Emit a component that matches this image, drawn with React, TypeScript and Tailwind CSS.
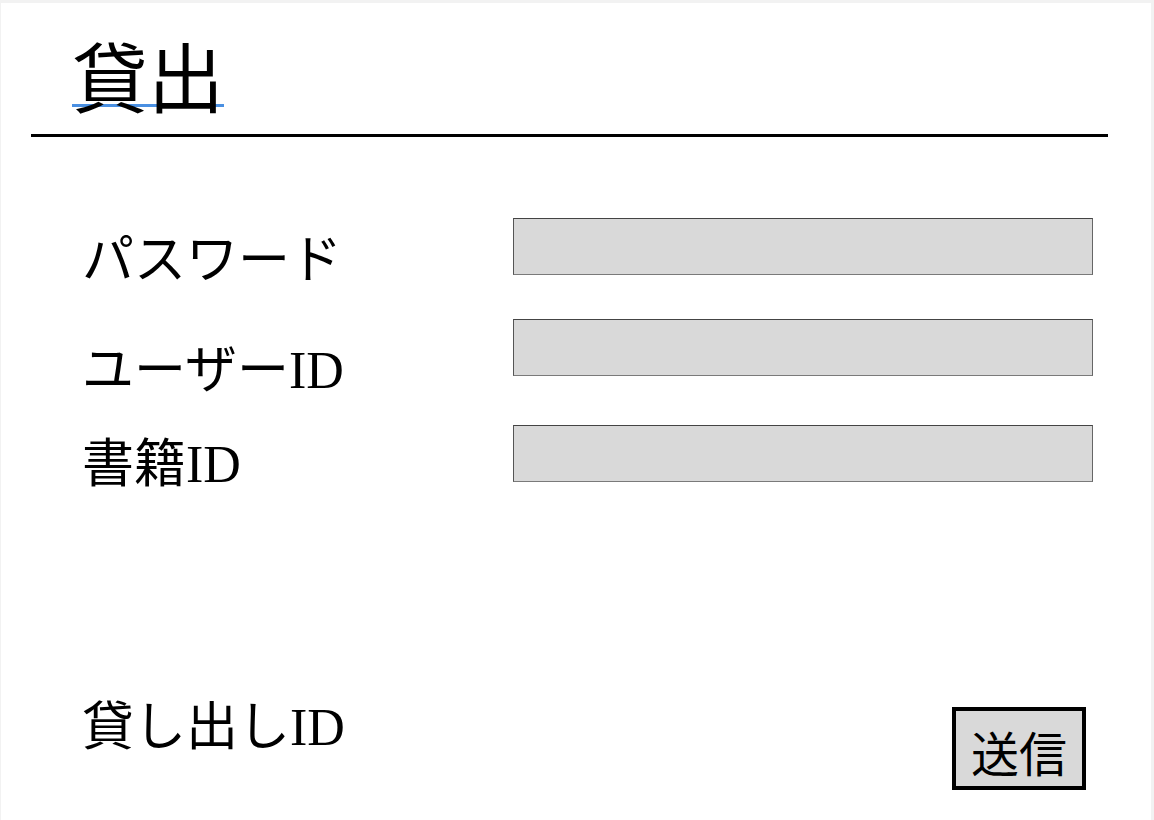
export default function App() {
  return (
    <div className="min-h-screen w-full bg-[#f2f2f2] pt-[3px] pl-[1px] pr-[3px]">
      <div className="h-[817px] bg-white text-black font-['Liberation_Serif','Noto_Sans_CJK_JP',serif]">
        <div className="h-[131px] pl-[71px] pt-[40px]">
          <h1 className="text-[76px] leading-none font-normal underline decoration-[#4a90e2] decoration-[3px] underline-offset-[-3px]">
            貸出
          </h1>
        </div>
        <div className="ml-[30px] mr-[43px] h-[3px] bg-black" />
        <div className="h-[565px] pl-[81px] flex">
          <div className="w-[431px] flex flex-col text-[52px] leading-none">
            <div className="mt-[98px] h-[52px]">パスワード</div>
            <div className="mt-[58px] h-[52px]">ユーザーID</div>
            <div className="mt-[42px] h-[52px]">書籍ID</div>
          </div>
          <div className="w-[580px] flex flex-col">
            <input className="mt-[81px] h-[57px] w-[580px] bg-[#d9d9d9] border border-t-[#444] border-l-[#555] border-b-[#7a7a7a] border-r-[#666] outline-none" />
            <input className="mt-[44px] h-[57px] w-[580px] bg-[#d9d9d9] border border-t-[#444] border-l-[#555] border-b-[#7a7a7a] border-r-[#666] outline-none" />
            <input className="mt-[49px] h-[57px] w-[580px] bg-[#d9d9d9] border border-t-[#444] border-l-[#555] border-b-[#7a7a7a] border-r-[#666] outline-none" />
          </div>
        </div>
        <div className="flex items-start justify-between pl-[81px] pr-[65px]">
          <div className="text-[52px] leading-none h-[52px]">貸し出しID</div>
          <button className="mt-[5px] w-[134px] h-[83px] border-4 border-black bg-[#d9d9d9] text-[48px] leading-none flex items-center justify-center pt-[14px]">
            送信
          </button>
        </div>
      </div>
    </div>
  );
}
